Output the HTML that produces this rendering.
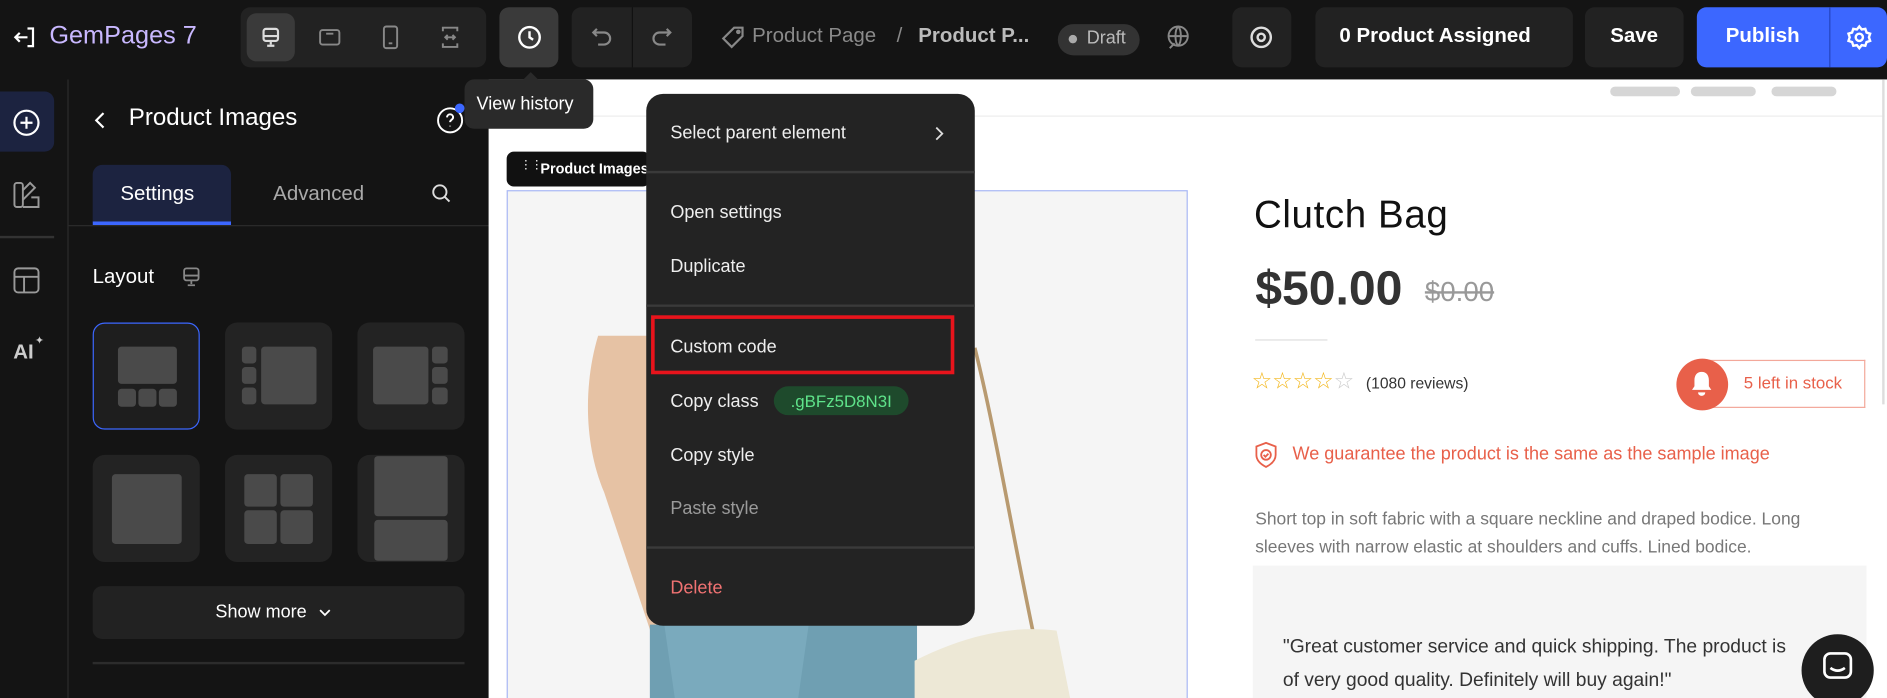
<!DOCTYPE html>
<html><head><meta charset="utf-8"><style>
*{box-sizing:border-box;margin:0;padding:0}
html,body{width:1887px;height:698px;overflow:hidden;background:#141414;font-family:"Liberation Sans",sans-serif}
#w{position:absolute;left:0;top:0;width:1568px;height:580px;transform:scale(1.20344);transform-origin:0 0;overflow:hidden;background:#141414}
.a{position:absolute}
.btn{position:absolute;background:#222;border-radius:8px}
.t{position:absolute;white-space:nowrap}
.mi{position:absolute;left:20px;color:#eee;font-size:15px}
.tile{position:absolute;width:89px;height:89px;background:#232323;border-radius:10px}
.g{position:absolute;background:#4a4a4a;border-radius:3px}
.dv{position:absolute;left:0;right:0;height:2px;background:#3a3a3a}
svg{position:absolute}
</style></head><body><div id="w">
<svg style="left:10px;top:20px" width="22" height="22" viewBox="0 0 24 24" fill="none" stroke="#fff" stroke-width="2"><path d="M14 4h5v16h-5M3 12h11M7 8l-4 4 4 4"/></svg>
<div class="t" style="left:41px;top:18px;color:#c9b8ff;font-size:21px">GemPages 7</div>
<div class="btn" style="left:200px;top:6px;width:204px;height:50px"></div>
<div class="btn" style="left:205px;top:11px;width:40px;height:40px;background:#3a3a3a"></div>
<svg style="left:215px;top:21px" width="20" height="20" viewBox="0 0 20 20" fill="none" stroke="#ddd" stroke-width="1.8"><rect x="4" y="3" width="12" height="10" rx="2"/><path d="M4 9h12M10 13v3M7 17h6"/></svg>
<svg style="left:264px;top:21px" width="20" height="20" viewBox="0 0 20 20" fill="none" stroke="#888" stroke-width="1.6"><rect x="2" y="4" width="16" height="12" rx="2"/><path d="M7 7h6"/></svg>
<svg style="left:315px;top:20px" width="20" height="22" viewBox="0 0 20 22" fill="none" stroke="#888" stroke-width="1.6"><rect x="4" y="2" width="11" height="18" rx="2"/><path d="M8 16h3"/></svg>
<svg style="left:363px;top:20px" width="22" height="22" viewBox="0 0 22 22" fill="none" stroke="#888" stroke-width="1.6"><path d="M5 6V3h12v3M5 16v3h12v-3M7 11h8M9 9l-2 2 2 2M13 9l2 2-2 2"/></svg>
<div class="btn" style="left:415px;top:6px;width:49px;height:50px;background:#3a3a3a"></div>
<svg style="left:428px;top:19px" width="24" height="24" viewBox="0 0 24 24" fill="none" stroke="#fff" stroke-width="2"><circle cx="12" cy="12" r="8.5"/><path d="M12 7v5l3 2"/></svg>
<div class="btn" style="left:475px;top:6px;width:100px;height:50px"></div>
<div class="a" style="left:525px;top:6px;width:1px;height:50px;background:#111"></div>
<svg style="left:489px;top:20px" width="22" height="22" viewBox="0 0 22 22" fill="none" stroke="#888" stroke-width="1.8"><path d="M7 4L4 7l3 3M4 7h9a5 5 0 010 10H8"/></svg>
<svg style="left:539px;top:20px" width="22" height="22" viewBox="0 0 22 22" fill="none" stroke="#888" stroke-width="1.8"><path d="M15 4l3 3-3 3M18 7H9a5 5 0 000 10h5"/></svg>
<svg style="left:598px;top:20px" width="22" height="22" viewBox="0 0 22 22" fill="none" stroke="#888" stroke-width="1.8"><path d="M12 3h7v7l-9 9-7-7z"/><circle cx="15.5" cy="6.5" r="1"/></svg>
<div class="t" style="left:625px;top:20px;color:#8a8a8a;font-size:17px">Product Page</div>
<div class="t" style="left:745px;top:20px;color:#8a8a8a;font-size:17px">/</div>
<div class="t" style="left:763px;top:20px;color:#bbb;font-size:17px;font-weight:bold">Product P...</div>
<div class="a" style="left:879px;top:20px;width:68px;height:26px;background:#333;border-radius:13px"></div>
<div class="a" style="left:888px;top:29px;width:7px;height:7px;background:#aaa;border-radius:50%"></div>
<div class="t" style="left:903px;top:23px;color:#bbb;font-size:15px">Draft</div>
<svg style="left:967px;top:19px" width="24" height="24" viewBox="0 0 24 24" fill="none" stroke="#888" stroke-width="1.6"><circle cx="12" cy="11" r="8"/><path d="M4 11h16M12 3c-3 3-3 13 0 16M12 3c3 3 3 13 0 16M5 21l4-4"/></svg>
<div class="btn" style="left:1024px;top:6px;width:49px;height:50px"></div>
<svg style="left:1037px;top:20px" width="22" height="22" viewBox="0 0 22 22" fill="none" stroke="#ddd" stroke-width="2"><circle cx="11" cy="11" r="8"/><circle cx="11" cy="11" r="3"/></svg>
<div class="btn" style="left:1093px;top:6px;width:214px;height:50px"></div>
<div class="t" style="left:1113px;top:20px;color:#fff;font-size:17px;font-weight:bold">0 Product Assigned</div>
<div class="btn" style="left:1317px;top:6px;width:82px;height:50px"></div>
<div class="t" style="left:1338px;top:20px;color:#fff;font-size:17px;font-weight:bold">Save</div>
<div class="btn" style="left:1410px;top:6px;width:158px;height:50px;background:#3c67ff"></div>
<div class="a" style="left:1520px;top:6px;width:1px;height:50px;background:#2445c0"></div>
<div class="t" style="left:1434px;top:20px;color:#fff;font-size:17px;font-weight:bold">Publish</div>
<svg style="left:1533px;top:19px" width="24" height="24" viewBox="0 0 24 24" fill="none" stroke="#fff" stroke-width="2"><circle cx="12" cy="12" r="3"/><path d="M12 3l2 2.5 3-.5 1 3 3 1-1 3 1 3-3 1-1 3-3-.5L12 21l-2-2.5-3 .5-1-3-3-1 1-3-1-3 3-1 1-3 3 .5z"/></svg>
<div class="a" style="left:0;top:66px;width:57px;height:514px;background:#141414;border-right:1px solid #2c2c2c"></div>
<div class="a" style="left:0;top:76px;width:45px;height:50px;background:#1c2340;border-radius:0 8px 8px 0"></div>
<svg style="left:10px;top:90px" width="24" height="24" viewBox="0 0 24 24" fill="none" stroke="#fff" stroke-width="1.8"><circle cx="12" cy="12" r="10"/><path d="M12 7v10M7 12h10"/></svg>
<svg style="left:10px;top:150px" width="24" height="24" viewBox="0 0 24 24" fill="none" stroke="#999" stroke-width="1.6"><rect x="2" y="2" width="7" height="20" rx="2"/><path d="M9 8l6-6 4 4-10 10M9 22h13v-8h-6"/></svg>
<div class="a" style="left:0;top:196px;width:45px;height:2px;background:#333"></div>
<svg style="left:10px;top:221px" width="24" height="24" viewBox="0 0 24 24" fill="none" stroke="#999" stroke-width="1.6"><rect x="2" y="2" width="20" height="20" rx="3"/><path d="M2 9h20M10 9v13"/></svg>
<div class="t" style="left:11px;top:283px;color:#ccc;font-size:17px;font-weight:bold">AI</div>
<div class="t" style="left:29px;top:278px;color:#ccc;font-size:9px">✦</div>
<svg style="left:76px;top:91px" width="14" height="18" viewBox="0 0 14 18" fill="none" stroke="#fff" stroke-width="1.8"><path d="M10 3L4 9l6 6"/></svg>
<div class="t" style="left:107px;top:87px;color:#fff;font-size:20px">Product Images</div>
<svg style="left:362px;top:88px" width="24" height="24" viewBox="0 0 24 24" fill="none" stroke="#fff" stroke-width="1.6"><circle cx="12" cy="12" r="10"/><path d="M9.5 9.5a2.5 2.5 0 115 0c0 2-2.5 2-2.5 4M12 16.5v.5"/></svg>
<div class="a" style="left:378px;top:86px;width:8px;height:8px;background:#3c67ff;border-radius:50%"></div>
<div class="a" style="left:77px;top:137px;width:115px;height:50px;background:#1c2340;border-radius:8px 8px 0 0;border-bottom:3px solid #3c67ff"></div>
<div class="t" style="left:100px;top:151px;color:#fff;font-size:17px">Settings</div>
<div class="t" style="left:227px;top:151px;color:#aaa;font-size:17px">Advanced</div>
<svg style="left:358px;top:152px" width="18" height="18" viewBox="0 0 18 18" fill="none" stroke="#ddd" stroke-width="1.6"><circle cx="7.5" cy="7.5" r="5.5"/><path d="M11.5 11.5l4 4"/></svg>
<div class="a" style="left:57px;top:187px;width:349px;height:1px;background:#2c2c2c"></div>
<div class="t" style="left:77px;top:220px;color:#fff;font-size:17px">Layout</div>
<svg style="left:150px;top:221px" width="18" height="18" viewBox="0 0 18 18" fill="none" stroke="#888" stroke-width="1.5"><rect x="3" y="2" width="12" height="10" rx="2"/><path d="M3 8h12M9 12v3M6 16h6"/></svg>
<div class="tile" style="left:77px;top:268px;border:1px solid #3c67ff;background:#1e1e1e"><div class="g" style="left:20px;top:19px;width:49px;height:31px"></div><div class="g" style="left:20px;top:54px;width:15px;height:15px"></div><div class="g" style="left:37px;top:54px;width:15px;height:15px"></div><div class="g" style="left:54px;top:54px;width:15px;height:15px"></div></div>
<div class="tile" style="left:187px;top:268px"><div class="g" style="left:14px;top:20px;width:12px;height:14px"></div><div class="g" style="left:14px;top:37px;width:12px;height:14px"></div><div class="g" style="left:14px;top:54px;width:12px;height:14px"></div><div class="g" style="left:30px;top:20px;width:46px;height:48px"></div></div>
<div class="tile" style="left:297px;top:268px"><div class="g" style="left:13px;top:20px;width:46px;height:48px"></div><div class="g" style="left:62px;top:20px;width:13px;height:14px"></div><div class="g" style="left:62px;top:37px;width:13px;height:14px"></div><div class="g" style="left:62px;top:54px;width:13px;height:14px"></div></div>
<div class="tile" style="left:77px;top:378px"><div class="g" style="left:16px;top:16px;width:58px;height:58px"></div></div>
<div class="tile" style="left:187px;top:378px"><div class="g" style="left:16px;top:16px;width:27px;height:27px"></div><div class="g" style="left:46px;top:16px;width:27px;height:27px"></div><div class="g" style="left:16px;top:46px;width:27px;height:28px"></div><div class="g" style="left:46px;top:46px;width:27px;height:28px"></div></div>
<div class="tile" style="left:297px;top:378px"><div class="g" style="left:14px;top:1px;width:61px;height:50px"></div><div class="g" style="left:14px;top:54px;width:61px;height:34px"></div></div>
<div class="a" style="left:77px;top:487px;width:309px;height:44px;background:#222;border-radius:8px"></div>
<div class="t" style="left:179px;top:500px;color:#fff;font-size:15px">Show more</div>
<svg style="left:263px;top:503px" width="14" height="12" viewBox="0 0 14 12" fill="none" stroke="#fff" stroke-width="1.5"><path d="M3 4l4 4 4-4"/></svg>
<div class="a" style="left:77px;top:550px;width:309px;height:2px;background:#2c2c2c"></div>
<div class="a" style="left:406px;top:66px;width:1162px;height:514px;background:#fff"></div>
<div class="a" style="left:1338px;top:72px;width:58px;height:8px;background:#d6d6d6;border-radius:4px"></div>
<div class="a" style="left:1405px;top:72px;width:54px;height:8px;background:#d6d6d6;border-radius:4px"></div>
<div class="a" style="left:1472px;top:72px;width:54px;height:8px;background:#d6d6d6;border-radius:4px"></div>
<div class="a" style="left:406px;top:96px;width:1160px;height:1px;background:#eee"></div>
<div class="a" style="left:1564px;top:66px;width:2px;height:270px;background:#ddd"></div>
<div class="a" style="left:421px;top:158px;width:566px;height:430px;background:#f5f5f5;border:1px solid #a9b8f5"></div>
<svg style="left:422px;top:159px" width="564" height="421" viewBox="0 0 564 421">
<path d="M75 120c-12 40-12 90 5 130l40 120 60 10 5-160c-10-40-30-80-55-100z" fill="#e6c2a4"/>
<path d="M118 360h222v70H118z" fill="#6f9fb2"/><path d="M130 360c30-10 80-10 120 0l-10 70h-100z" fill="#7aaabd"/>
<path d="M388 130c20 80 35 180 60 290" stroke="#b89a70" stroke-width="3" fill="none"/>
<path d="M338 390c40-20 80-30 118-25l12 60H338z" fill="#ede8d6"/>
</svg>
<div class="a" style="left:421px;top:126px;width:119px;height:29px;background:#111;border-radius:6px"></div>
<div class="t" style="left:432px;top:132px;color:#fff;font-size:10px;letter-spacing:-1px">⋮⋮</div>
<div class="t" style="left:449px;top:133px;color:#fff;font-size:12px;font-weight:bold">Product Images</div>
<div class="a" style="left:436px;top:62px;width:10px;height:10px;background:#2a2a2a;transform:rotate(45deg)"></div>
<div class="a" style="left:386px;top:66px;width:107px;height:41px;background:#2a2a2a;border-radius:8px"></div>
<div class="t" style="left:396px;top:78px;color:#fff;font-size:15px">View history</div>
<div class="a" style="left:537px;top:78px;width:273px;height:442px;background:#232323;border-radius:14px">
<div class="mi" style="top:24px">Select parent element</div>
<svg style="left:236px;top:25px" width="14" height="16" viewBox="0 0 14 16" fill="none" stroke="#ddd" stroke-width="1.5"><path d="M5 3l5 5-5 5"/></svg>
<div class="dv" style="top:64px"></div>
<div class="mi" style="top:90px">Open settings</div>
<div class="mi" style="top:135px">Duplicate</div>
<div class="dv" style="top:175px"></div>
<div class="a" style="left:4px;top:184px;width:252px;height:49px;border:3px solid #e8141c"></div>
<div class="mi" style="top:202px">Custom code</div>
<div class="mi" style="top:247px">Copy class</div>
<div class="a" style="left:106px;top:243px;width:112px;height:24px;background:#1e4a2c;border-radius:12px;color:#5fe38a;font-size:14px;text-align:center;line-height:24px">.gBFz5D8N3I</div>
<div class="mi" style="top:292px">Copy style</div>
<div class="mi" style="top:336px;color:#9a9a9a">Paste style</div>
<div class="dv" style="top:376px"></div>
<div class="mi" style="top:402px;color:#f07272">Delete</div>
</div>
<div class="t" style="left:1042px;top:160px;color:#111;font-size:32px;font-weight:300;letter-spacing:0.5px">Clutch Bag</div>
<div class="t" style="left:1043px;top:218px;color:#333;font-size:40px;font-weight:bold">$50.00</div>
<div class="t" style="left:1184px;top:229px;color:#999;font-size:23px;text-decoration:line-through">$0.00</div>
<div class="a" style="left:1043px;top:282px;width:60px;height:1px;background:#ddd"></div>
<div class="t" style="left:1040px;top:306px;color:#f3b81f;font-size:19px;letter-spacing:0">☆☆☆☆<span style="color:#ccc">☆</span></div>
<div class="t" style="left:1135px;top:311px;color:#333;font-size:13px">(1080 reviews)</div>
<div class="a" style="left:1418px;top:299px;width:132px;height:40px;border:1px solid #f3a89a;border-left:none"></div>
<div class="a" style="left:1393px;top:298px;width:43px;height:43px;background:#e8604a;border-radius:50%"></div>
<svg style="left:1403px;top:307px" width="22" height="24" viewBox="0 0 22 24" fill="#fff"><path d="M11 2c4 0 6 3 6 7v5l2 3H3l2-3V9c0-4 2-7 6-7zM8 19h6a3 3 0 01-6 0z"/></svg>
<div class="t" style="left:1449px;top:310px;color:#e8604a;font-size:14px">5 left in stock</div>
<svg style="left:1041px;top:366px" width="22" height="24" viewBox="0 0 22 24" fill="none" stroke="#e8604a" stroke-width="1.5"><path d="M11 2l8 3v7c0 5-4 8-8 10-4-2-8-5-8-10V5z"/><circle cx="11" cy="12" r="4"/><path d="M9 12l1.5 1.5L13 11"/></svg>
<div class="t" style="left:1074px;top:369px;color:#e8604a;font-size:15px">We guarantee the product is the same as the sample image</div>
<div class="t" style="left:1043px;top:421px;color:#777;font-size:14.5px;line-height:23px">Short top in soft fabric with a square neckline and draped bodice. Long<br>sleeves with narrow elastic at shoulders and cuffs. Lined bodice.</div>
<div class="a" style="left:1041px;top:470px;width:510px;height:110px;background:#f5f5f5"></div>
<div class="t" style="left:1066px;top:524px;color:#333;font-size:16px;line-height:28px">"Great customer service and quick shipping. The product is<br>of very good quality. Definitely will buy again!"</div>
<div class="a" style="left:1497px;top:527px;width:60px;height:60px;background:#1e1e1e;border-radius:50%"></div>
<svg style="left:1513px;top:540px" width="28" height="30" viewBox="0 0 28 30" fill="none" stroke="#fff" stroke-width="2.2"><rect x="3" y="3" width="22" height="20" rx="5"/><path d="M8 15c4 3 8 3 12 0"/></svg>
</div></body></html>
